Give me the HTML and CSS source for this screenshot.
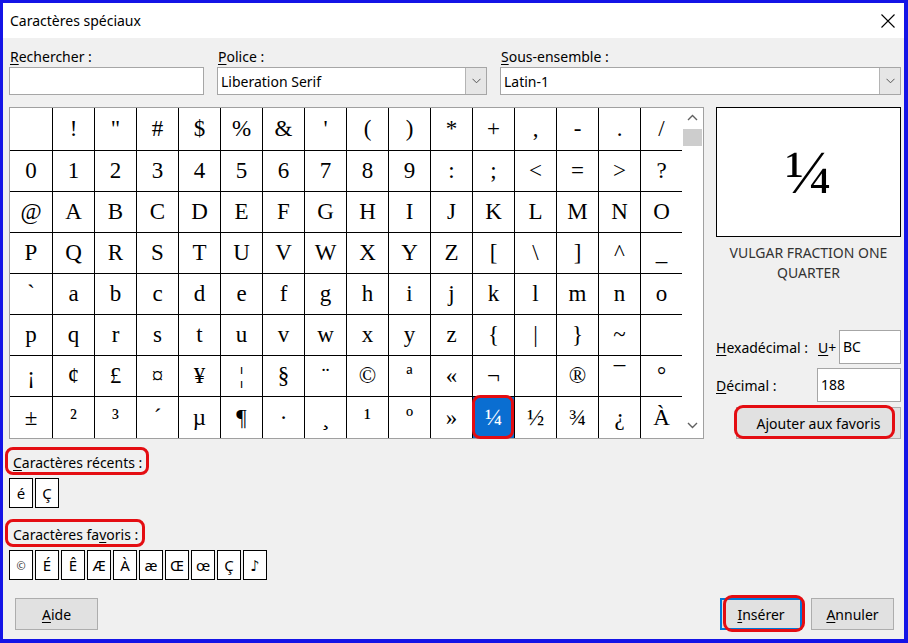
FILE: index.html
```html
<!DOCTYPE html>
<html lang="fr">
<head>
<meta charset="utf-8">
<title>Caractères spéciaux</title>
<link rel="stylesheet" href="styles.css">
</head>
<body>
<div class="dialog">
  <div class="titlebar">
    <span class="title">Caractères spéciaux</span>
    <svg class="close" width="14" height="14" viewBox="0 0 14 14"><path d="M0.5 0.5 L13.5 13.5 M13.5 0.5 L0.5 13.5" stroke="#000" stroke-width="1.1" fill="none"/></svg>
  </div>

  <div class="content">
    <div class="fields">
      <div class="field">
        <label><u>R</u>echercher :</label>
        <div class="input"></div>
      </div>
      <div class="field">
        <label><u>P</u>olice :</label>
        <div class="select"><span>Liberation Serif</span><span class="drop"><svg width="9" height="6" viewBox="0 0 9 6"><path d="M0.5 0.8 L4.5 4.8 L8.5 0.8" stroke="#555" fill="none"/></svg></span></div>
      </div>
      <div class="field">
        <label><u>S</u>ous-ensemble :</label>
        <div class="select"><span>Latin-1</span><span class="drop"><svg width="9" height="6" viewBox="0 0 9 6"><path d="M0.5 0.8 L4.5 4.8 L8.5 0.8" stroke="#555" fill="none"/></svg></span></div>
      </div>
    </div>

    <div class="main">
      <div class="charmap-wrap">
        <div class="charmap">
          <span> </span><span>!</span><span>"</span><span>#</span><span>$</span><span>%</span><span>&amp;</span><span>'</span><span>(</span><span>)</span><span>*</span><span>+</span><span>,</span><span>-</span><span>.</span><span>/</span>
          <span>0</span><span>1</span><span>2</span><span>3</span><span>4</span><span>5</span><span>6</span><span>7</span><span>8</span><span>9</span><span>:</span><span>;</span><span>&lt;</span><span>=</span><span>&gt;</span><span>?</span>
          <span>@</span><span>A</span><span>B</span><span>C</span><span>D</span><span>E</span><span>F</span><span>G</span><span>H</span><span>I</span><span>J</span><span>K</span><span>L</span><span>M</span><span>N</span><span>O</span>
          <span>P</span><span>Q</span><span>R</span><span>S</span><span>T</span><span>U</span><span>V</span><span>W</span><span>X</span><span>Y</span><span>Z</span><span>[</span><span>\</span><span>]</span><span>^</span><span>_</span>
          <span>`</span><span>a</span><span>b</span><span>c</span><span>d</span><span>e</span><span>f</span><span>g</span><span>h</span><span>i</span><span>j</span><span>k</span><span>l</span><span>m</span><span>n</span><span>o</span>
          <span>p</span><span>q</span><span>r</span><span>s</span><span>t</span><span>u</span><span>v</span><span>w</span><span>x</span><span>y</span><span>z</span><span>{</span><span>|</span><span>}</span><span>~</span><span></span>
          <span>¡</span><span>¢</span><span>£</span><span>¤</span><span>¥</span><span>¦</span><span>§</span><span>¨</span><span>©</span><span>ª</span><span>«</span><span>¬</span><span></span><span>®</span><span>¯</span><span>°</span>
          <span>±</span><span>²</span><span>³</span><span>´</span><span>µ</span><span>¶</span><span>·</span><span>¸</span><span>¹</span><span>º</span><span>»</span><span class="selected">¼</span><span>½</span><span>¾</span><span>¿</span><span>À</span>
        </div>
        <div class="scrollbar">
          <svg class="arrow" width="11" height="7" viewBox="0 0 11 7"><path d="M1 6 L5.5 1.5 L10 6" stroke="#606060" stroke-width="1.4" fill="none"/></svg>
          <div class="thumb"></div>
          <div class="track"></div>
          <svg class="arrow" width="11" height="7" viewBox="0 0 11 7"><path d="M1 1 L5.5 5.5 L10 1" stroke="#606060" stroke-width="1.4" fill="none"/></svg>
        </div>
      </div>

      <div class="side">
        <div>
          <div class="preview">¼</div>
          <div class="charname">VULGAR FRACTION ONE<br>QUARTER</div>
        </div>
        <div class="codes">
          <div class="code-grid">
            <span class="code-label"><u>H</u>exadécimal :</span>
            <span class="uplus"><u>U</u>+</span>
            <div class="input small">BC</div>
            <span class="code-label"><u>D</u>écimal :</span>
            <div class="input small wide">188</div>
          </div>
          <button class="btn fav marked">Ajouter aux favoris</button>
        </div>
      </div>
    </div>

    <div class="section recent">
      <span class="section-label marked"><u>C</u>aractères récents :</span>
      <div class="chips">
        <span>é</span><span>Ç</span>
      </div>
    </div>

    <div class="section favs">
      <span class="section-label marked">Caractères fa<u>v</u>oris :</span>
      <div class="chips">
        <span class="copy">©</span><span>É</span><span>Ê</span><span>Æ</span><span>À</span><span>æ</span><span>Œ</span><span>œ</span><span>Ç</span><span>♪</span>
      </div>
    </div>

    <div class="buttons">
      <button class="btn help"><u>A</u>ide</button>
      <div class="right-buttons">
        <button class="btn default marked"><u>I</u>nsérer</button>
        <button class="btn"><u>A</u>nnuler</button>
      </div>
    </div>
  </div>
</div>
</body>
</html>
```

FILE: styles.css
```css
* {
    box-sizing: border-box;
}
body {
    margin: 0;
    font-family: "Noto Sans", "DejaVu Sans", sans-serif;
    font-size: 14px;
    color: #000;
}
u {
    text-decoration-thickness: 1px;
    text-underline-offset: 2px;
}

.dialog {
    width: 908px;
    height: 643px;
    border-style: solid;
    border-color: #1414e6;
    border-width: 3px 4px 4px 3px;
    background: #f0f0f0;
    display: flex;
    flex-direction: column;
}
.titlebar {
    height: 35px;
    flex: none;
    background: #fff;
    display: flex;
    align-items: center;
    justify-content: space-between;
    padding: 0 9px 0 7px;
}

.content {
    padding: 9px 3px 0 6px;
}

/* top row: search / font / subset */
.fields {
    display: grid;
    grid-template-columns: 195px 270px 1fr;
    column-gap: 13px;
}
.field label {
    display: block;
    line-height: 20px;
    padding-left: 1px;
}
.input {
    height: 28px;
    background: #fff;
    border: 1px solid #a6a6a6;
    padding: 0 4px;
    line-height: 26px;
}
.select {
    height: 28px;
    background: #fff;
    border: 1px solid #a6a6a6;
    display: flex;
    align-items: center;
    justify-content: space-between;
    padding-left: 3px;
}
.select .drop {
    width: 21px;
    height: 26px;
    background: #e6e6e6;
    border-left: 1px solid #b4b4b4;
    display: flex;
    align-items: center;
    justify-content: center;
}

/* character map */
.main {
    display: flex;
    gap: 12px;
    margin-top: 12px;
}
.charmap-wrap {
    width: 695px;
    height: 332px;
    border: 1px solid #a0a0a0;
    display: flex;
    background: #fff;
}
.charmap {
    display: grid;
    grid-template-columns: 42px repeat(15, 41px);
    grid-template-rows: 42px repeat(6, 40px) 41px;
    gap: 1px;
    background: #000;
    width: 672px;
    font-family: "Liberation Serif", serif;
    font-size: 23px;
}
.charmap span {
    background: #fff;
    display: flex;
    align-items: center;
    justify-content: center;
}
.charmap .selected {
    background: #0a6ed1;
    color: #fff;
    position: relative;
}
.charmap .selected::after {
    content: "";
    position: absolute;
    inset: -2px 0 -1px -1px;
    border: 3px solid #e40d12;
    border-radius: 8px;
}
.scrollbar {
    width: 21px;
    display: flex;
    flex-direction: column;
    align-items: center;
    background: #fff;
}
.scrollbar .arrow {
    margin: 6px 0 8px;
}
.scrollbar .thumb {
    width: 19px;
    height: 17px;
    background: #cdcdcd;
}
.scrollbar .track {
    flex: 1;
}
.scrollbar .arrow:last-child {
    margin: 0 0 9px;
}

/* right side panel */
.side {
    width: 185px;
    height: 332px;
    display: flex;
    flex-direction: column;
    justify-content: space-between;
}
.preview {
    height: 130px;
    background: #fff;
    border: 1px solid #000;
    display: flex;
    align-items: center;
    justify-content: center;
    font-family: "Liberation Serif", serif;
    font-size: 62px;
}
.charname {
    margin-top: 6px;
    text-align: center;
    line-height: 20px;
    color: #333;
}
.code-grid {
    display: grid;
    grid-template-columns: 101px 22px 62px;
    grid-template-rows: 34px 34px;
    row-gap: 4px;
    align-items: center;
}
.input.small {
    height: 34px;
    line-height: 32px;
    padding-left: 3px;
}
.input.wide {
    grid-column: 2 / 4;
}
.uplus {
    padding-left: 1px;
}

.btn {
    font-family: inherit;
    font-size: 14px;
    color: #000;
    background: #e1e1e1;
    border: 1px solid #adadad;
    height: 32px;
    padding: 0;
}
.btn.fav {
    display: block;
    width: 165px;
    margin: 5px 0 0 20px;
}
.marked {
    position: relative;
}
.btn.fav::after {
    content: "";
    position: absolute;
    inset: -3px 5px -1px -3px;
    border: 3px solid #e40d12;
    border-radius: 9px;
}

/* recent and favorite characters */
.section {
    padding-left: 3px;
}
.recent {
    margin-top: 14px;
}
.favs {
    margin-top: 17px;
}
.section-label {
    display: inline-block;
    line-height: 20px;
    padding-left: 1px;
}
.section-label::after {
    content: "";
    position: absolute;
    inset: -6px -7px -2px -7px;
    border: 3px solid #e40d12;
    border-radius: 8px;
}
.chips {
    display: flex;
    gap: 2px;
    margin-top: 5px;
    margin-left: -3px;
}
.chips span {
    width: 24px;
    height: 30px;
    background: #fff;
    border: 1px solid #000;
    display: flex;
    align-items: center;
    justify-content: center;
    font-size: 15px;
}
.chips .copy {
    font-size: 11px;
    color: #333;
}

/* bottom buttons */
.buttons {
    display: flex;
    justify-content: space-between;
    margin-top: 18px;
    padding: 0 7px 0 6px;
}
.btn.help {
    width: 83px;
}
.right-buttons {
    display: flex;
    gap: 9px;
}
.right-buttons .btn {
    width: 83px;
}
.btn.default {
    width: 82px;
    border: 1px solid #0078d7;
    box-shadow: inset 0 0 0 1px #0078d7;
}
.btn.default::after {
    content: "";
    position: absolute;
    inset: -4px -4px -3px 2px;
    border: 3px solid #e40d12;
    border-radius: 9px;
}
```
